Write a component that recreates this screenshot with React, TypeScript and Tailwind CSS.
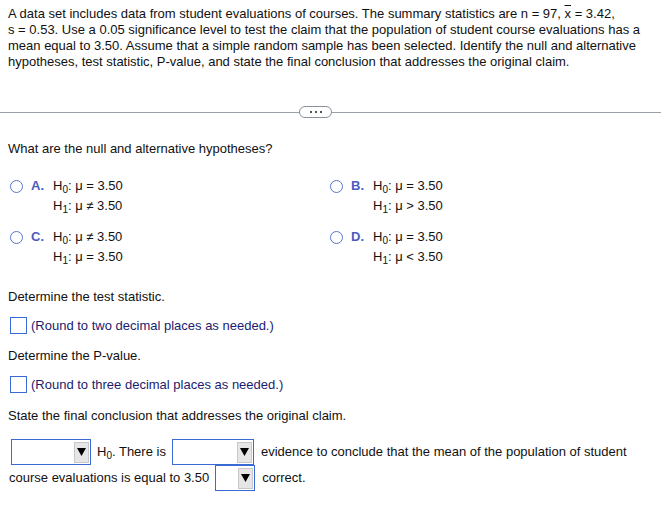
import React from 'react';

const font = { fontFamily: '"Liberation Sans", Arial, sans-serif' };

const Radio: React.FC<{ letter: string; h0: string; h1: string }> = ({ letter, h0, h1 }) => (
  <div className="flex flex-col">
    <div className="flex items-center h-5">
      <span className="w-[13px] h-[13px] rounded-full border-[1.5px] border-[#5b74d0] bg-white shrink-0" />
      <span className="ml-[8px] w-[22px] font-bold text-[#4a5cc0]">{letter}.</span>
      <span>
        H<sub className="text-[10px]">0</sub>: μ {h0} 3.50
      </span>
    </div>
    <div className="flex items-center h-5 pl-[43px]">
      <span>
        H<sub className="text-[10px]">1</sub>: μ {h1} 3.50
      </span>
    </div>
  </div>
);

const Select: React.FC<{ w: string }> = ({ w }) => (
  <span className={`inline-flex items-center justify-end ${w} h-[26px] border border-[#3a6bd4] bg-white pr-[1px]`}>
    <span className="flex items-center justify-center w-[15px] h-[21px] bg-[#e6e6e6] border border-[#c8c8c8]">
      <svg width="9" height="8" viewBox="0 0 9 8">
        <polygon points="0,0 9,0 4.5,8" fill="#000" />
      </svg>
    </span>
  </span>
);

const InputBox = () => (
  <span className="inline-block w-[17px] h-[17px] border border-[#3a6bd4] bg-white shrink-0" />
);

export default function App() {
  return (
    <div className="w-[661px] h-[521px] bg-white text-[13px] leading-4 text-[#111]" style={font}>
      <p className="px-2 pt-[6px]">
        A data set includes data from student evaluations of courses. The summary statistics are n = 97,{' '}
        <span className="overline">x</span> = 3.42, {'s\u00a0=\u00a00.53.'} Use a 0.05 significance level to test the
        claim that the population of student course evaluations has a mean equal to 3.50. Assume that a simple random
        sample has been selected. Identify the null and alternative hypotheses, test statistic, P-value, and state the
        final conclusion that addresses the original claim.
      </p>

      <div className="relative mt-[42px] h-px bg-[#9aa0a8]">
        <span className="absolute left-[299px] top-[-6px] w-[33px] h-[12px] rounded-full border border-[#8a9099] bg-white flex items-center justify-center gap-[3px]">
          <span className="w-[2px] h-[2px] bg-[#555]" />
          <span className="w-[2px] h-[2px] bg-[#555]" />
          <span className="w-[2px] h-[2px] bg-[#555]" />
        </span>
      </div>

      <p className="px-2 mt-[28px]">What are the null and alternative hypotheses?</p>

      <div className="grid grid-cols-[320px_1fr] pl-[10px] mt-[19px] gap-y-[11px]">
        <Radio letter="A" h0="=" h1="≠" />
        <Radio letter="B" h0="=" h1=">" />
        <Radio letter="C" h0="≠" h1="=" />
        <Radio letter="D" h0="=" h1="<" />
      </div>

      <p className="px-2 mt-[22px]">Determine the test statistic.</p>
      <div className="flex items-center gap-[4px] pl-[10px] mt-[12px]">
        <InputBox />
        <span className="text-[#1b1b70]">(Round to two decimal places as needed.)</span>
      </div>

      <p className="px-2 mt-[14px]">Determine the P-value.</p>
      <div className="flex items-center gap-[4px] pl-[10px] mt-[12px]">
        <InputBox />
        <span className="text-[#1b1b70]">(Round to three decimal places as needed.)</span>
      </div>

      <p className="px-2 mt-[15px]">State the final conclusion that addresses the original claim.</p>

      <div className="flex items-center pl-[11px] mt-[15px] h-[26px]">
        <Select w="w-[80px]" />
        <span className="ml-[6px]">
          H<sub className="text-[10px]">0</sub>. There is
        </span>
        <span className="ml-[6px]">
          <Select w="w-[82px]" />
        </span>
        <span className="ml-[7px]">evidence to conclude that the mean of the population of student</span>
      </div>
      <div className="flex items-center pl-[9px] h-[26px]">
        <span>course evaluations is equal to 3.50</span>
        <span className="ml-[6px]">
          <Select w="w-[40px]" />
        </span>
        <span className="ml-[7px]">correct.</span>
      </div>
    </div>
  );
}
